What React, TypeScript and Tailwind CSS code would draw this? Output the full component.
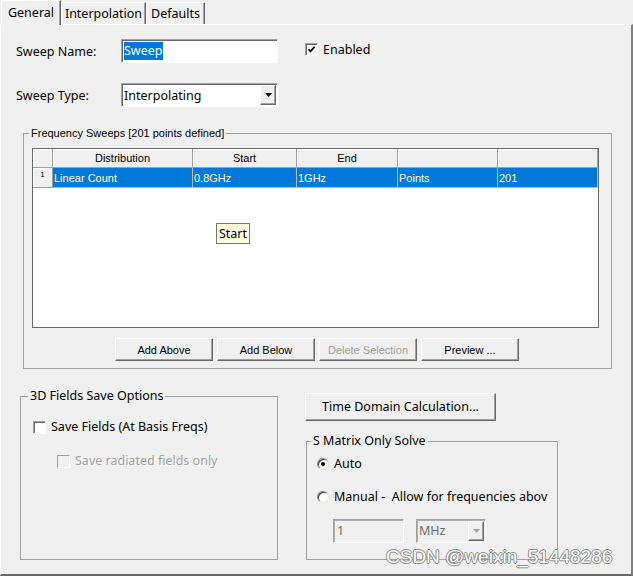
import React from "react";

const MAIN = "font-['Noto_Sans',sans-serif] text-[12.5px] leading-[16px]";
const SMALL = "font-['Liberation_Sans',Arial,sans-serif] text-[11px] leading-[14px]";
const RAISED =
  "bg-[#f0f0f0] border border-t-white border-l-white border-r-[#696969] border-b-[#696969] shadow-[inset_-1px_-1px_0_#a0a0a0]";
const SUNKEN =
  "border border-t-[#a0a0a0] border-l-[#a0a0a0] border-r-white border-b-white shadow-[inset_1px_1px_0_#696969]";
const HDR =
  "bg-[#f0f0f0] border-r border-b border-r-[#a0a0a0] border-b-[#a0a0a0] shadow-[inset_1px_1px_0_#ffffff] flex items-center justify-center shrink-0";
const CELL =
  "bg-[#0078d7] text-white border-r border-b border-r-[#b9b9b9] border-b-[#b9b9b9] flex items-center pl-[1px] shrink-0 overflow-hidden whitespace-nowrap";

function CheckBox({ checked = false, disabled = false }: { checked?: boolean; disabled?: boolean }) {
  return (
    <span
      className={
        disabled
          ? "w-[13px] h-[13px] shrink-0 bg-[#f0f0f0] border border-t-[#a0a0a0] border-l-[#a0a0a0] border-r-white border-b-white flex items-center justify-center"
          : "w-[13px] h-[13px] shrink-0 bg-white " + SUNKEN + " flex items-center justify-center"
      }
    >
      {checked && (
        <svg width="9" height="9" viewBox="0 0 9 9">
          <path d="M1.5 4.2 L3.5 6.4 L7.6 1.8" stroke="#000" strokeWidth="1.7" fill="none" />
        </svg>
      )}
    </span>
  );
}

function Radio({ on = false }: { on?: boolean }) {
  return (
    <span className="w-[12px] h-[12px] rounded-full bg-white border border-t-[#808080] border-l-[#808080] border-r-[#e3e3e3] border-b-[#e3e3e3] shadow-[inset_1px_1px_0_#404040] flex items-center justify-center shrink-0">
      {on && <span className="w-[4px] h-[4px] rounded-full bg-black" />}
    </span>
  );
}

function Arrow({ color = "#000" }: { color?: string }) {
  return (
    <svg width="7" height="4" viewBox="0 0 7 4">
      <path d="M0 0 H7 L3.5 4 Z" fill={color} />
    </svg>
  );
}

export default function App() {
  return (
    <div className={"relative w-[633px] h-[576px] bg-[#f0f0f0] overflow-hidden text-black " + MAIN}>
      {/* Tabs */}
      <div className="flex items-end h-[24px] pl-[1px]">
        <div className="relative z-10 -mb-[1px] h-[25px] w-[60px] bg-[#f0f0f0] border-t border-l border-t-white border-l-white border-r border-r-[#696969] shadow-[inset_-1px_0_0_#a0a0a0] flex justify-center pt-[4px]">
          General
        </div>
        <div className="h-[22px] w-[85px] bg-[#f0f0f0] border-t border-l border-t-white border-l-white border-r border-r-[#696969] shadow-[inset_-1px_0_0_#a0a0a0] flex justify-center pt-[3px]">
          Interpolation
        </div>
        <div className="h-[22px] w-[59px] bg-[#f0f0f0] border-t border-l border-t-white border-l-white border-r border-r-[#696969] shadow-[inset_-1px_0_0_#a0a0a0] flex justify-center pt-[3px]">
          Defaults
        </div>
      </div>

      {/* Panel */}
      <div className="h-[552px] border-t border-t-white border-l border-l-white border-r-2 border-r-[#808080] border-b-2 border-b-[#696969] flex flex-col">
        {/* Sweep Name row */}
        <div className="mt-[14px] h-[24px] flex items-center pl-[15px]">
          <span className="w-[105px] shrink-0 pt-[1px]">Sweep Name:</span>
          <div className={"w-[157px] h-[24px] bg-white pl-[2px] flex items-center shrink-0 " + SUNKEN}>
            <span className="bg-[#0078d7] text-white leading-[18px] pr-[1px]">Sweep</span>
          </div>
          <div className="self-start mt-[4px] ml-[27px] h-[13px] flex items-center gap-[5px]">
            <CheckBox checked />
            <span>Enabled</span>
          </div>
        </div>

        {/* Sweep Type row */}
        <div className="mt-[20px] h-[24px] flex items-center pl-[15px]">
          <span className="w-[105px] shrink-0 pt-[1px]">Sweep Type:</span>
          <div className={"w-[157px] h-[24px] bg-white pl-[2px] flex items-center justify-between shrink-0 " + SUNKEN}>
            <span className="pt-[1px]">Interpolating</span>
            <div className={"w-[16px] h-[20px] mr-[1px] flex items-center justify-center " + RAISED}>
              <Arrow />
            </div>
          </div>
        </div>

        {/* Frequency Sweeps group */}
        <fieldset className="mt-[19px] ml-[22px] w-[589px] h-[243px] border border-[#a0a0a0] shrink-0">
          <legend className={"ml-[5px] px-[2px] " + SMALL}>Frequency Sweeps [201 points defined]</legend>
          <div className={"relative mt-[8px] ml-[8px] w-[567px] h-[180px] border border-[#696969] bg-white " + SMALL}>
            <div className="flex h-[19px]">
              <div className={HDR + " w-[20px]"} />
              <div className={HDR + " w-[140px]"}>Distribution</div>
              <div className={HDR + " w-[104px]"}>Start</div>
              <div className={HDR + " w-[101px]"}>End</div>
              <div className={HDR + " w-[100px]"} />
              <div className={HDR + " w-[100px]"} />
            </div>
            <div className="flex h-[20px]">
              <div className="bg-[#f0f0f0] border-r border-b border-r-[#a0a0a0] border-b-[#a0a0a0] shadow-[inset_1px_1px_0_#ffffff] w-[20px] shrink-0 flex justify-center pt-[3px] text-[8px] leading-[8px]">
                1
              </div>
              <div className={CELL + " w-[140px]"}>Linear Count</div>
              <div className={CELL + " w-[104px]"}>0.8GHz</div>
              <div className={CELL + " w-[101px]"}>1GHz</div>
              <div className={CELL + " w-[100px]"}>Points</div>
              <div className={CELL + " w-[100px]"}>201</div>
            </div>
            <div
              className={
                "absolute left-[183px] top-[74px] w-[34px] h-[21px] border border-[#767676] bg-[#ffffe1] flex items-center justify-center text-black " +
                MAIN
              }
            >
              Start
            </div>
          </div>
          <div className={"mt-[10px] ml-[91px] flex gap-[4px] " + SMALL}>
            <div className={"w-[98px] h-[23px] flex items-center justify-center " + RAISED}>Add Above</div>
            <div className={"w-[98px] h-[23px] flex items-center justify-center " + RAISED}>Add Below</div>
            <div className={"w-[98px] h-[23px] flex items-center justify-center text-[#a0a0a0] " + RAISED}>
              Delete Selection
            </div>
            <div className={"w-[98px] h-[23px] flex items-center justify-center " + RAISED}>Preview ...</div>
          </div>
        </fieldset>

        {/* Bottom area */}
        <div className="flex items-start ml-[19px]">
          <fieldset className="mt-[19px] w-[258px] h-[172px] border border-[#a0a0a0] shrink-0">
            <legend className="ml-[7px] px-[2px] leading-[16px]">3D Fields Save Options</legend>
            <div className="mt-[15px] ml-[12px] h-[16px] flex items-center gap-[5px]">
              <CheckBox />
              <span>Save Fields (At Basis Freqs)</span>
            </div>
            <div className="mt-[18px] ml-[36px] h-[16px] flex items-center gap-[5px]">
              <CheckBox disabled />
              <span className="text-[#a0a0a0] [text-shadow:1px_1px_0_#ffffff]">Save radiated fields only</span>
            </div>
          </fieldset>

          <div className="ml-[27px] flex flex-col">
            <div className={"mt-[24px] w-[191px] h-[28px] flex items-center justify-center " + RAISED}>
              Time Domain Calculation...
            </div>
            <fieldset className="mt-[12px] ml-[1px] w-[252px] h-[127px] border border-[#a0a0a0]">
              <legend className="ml-[4px] px-[2px] leading-[16px]">S Matrix Only Solve</legend>
              <div className="mt-[7px] ml-[10px] h-[16px] flex items-center gap-[5px]">
                <Radio on />
                <span>Auto</span>
              </div>
              <div className="mt-[17px] ml-[10px] w-[232px] h-[16px] flex items-center gap-[5px] overflow-hidden whitespace-nowrap">
                <Radio />
                <span>Manual -&nbsp; Allow for frequencies abov</span>
              </div>
              <div className="mt-[14px] ml-[26px] flex gap-[12px]">
                <div className="w-[71px] h-[24px] bg-[#f0f0f0] border border-t-[#a0a0a0] border-l-[#a0a0a0] border-r-white border-b-white shadow-[inset_1px_1px_0_#b0b0b0] pl-[3px] flex items-center text-[#6d6d6d]">
                  1
                </div>
                <div className="w-[70px] h-[24px] bg-[#f0f0f0] border border-t-[#a0a0a0] border-l-[#a0a0a0] border-r-white border-b-white shadow-[inset_1px_1px_0_#b0b0b0] pl-[2px] flex items-center justify-between text-[#6d6d6d]">
                  <span>MHz</span>
                  <div className={"w-[16px] h-[20px] mr-[1px] flex items-center justify-center " + RAISED}>
                    <Arrow color="#a0a0a0" />
                  </div>
                </div>
              </div>
            </fieldset>
          </div>
        </div>
      </div>

      {/* Watermark */}
      <div className="absolute left-[386px] top-[547px] font-['Liberation_Sans',Arial,sans-serif] text-[19px] leading-[19px] text-white whitespace-nowrap [text-shadow:1px_0_0_#8a8a8a,-1px_0_0_#8a8a8a,0_1px_0_#8a8a8a,0_-1px_0_#8a8a8a]">
        CSDN @weixin_51448286
      </div>
    </div>
  );
}
